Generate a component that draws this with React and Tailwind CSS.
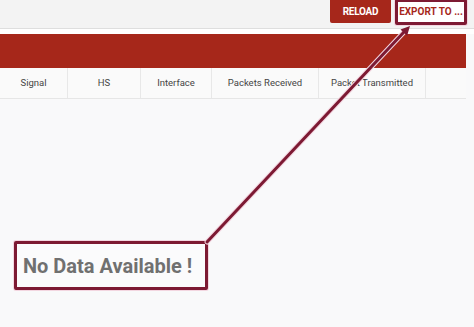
import React from 'react';

const columns = [
  { label: 'Signal', w: 'w-[68px]' },
  { label: 'HS', w: 'w-[73px]' },
  { label: 'Interface', w: 'w-[71px]' },
  { label: 'Packets Received', w: 'w-[107px]' },
  { label: 'Packet Transmitted', w: 'w-[107px]' },
];

const App = () => {
  return (
    <div className="relative w-[474px] h-[327px] overflow-hidden bg-[#f9f9fa] font-['Roboto','Liberation_Sans',sans-serif]">
      {/* Toolbar */}
      <div className="h-[29px] bg-[#f3f3f3] border-b border-[#dedede] flex justify-end items-start pr-[7px] gap-[4px]">
        <button className="h-[23px] w-[61px] bg-[#a6271b] text-white text-[10px] font-bold tracking-tight rounded-b-[2px]">
          RELOAD
        </button>
        <button className="h-[26px] w-[72px] -mt-[1px] bg-white text-[#a6271b] text-[10px] font-bold border-[3px] border-[#7d1a33] rounded-[2px] shadow-[0_0_0_1px_#f3d6e0] leading-none whitespace-nowrap">
          EXPORT TO ...
        </button>
      </div>

      <div className="h-[5px] bg-white" />

      {/* Red band */}
      <div className="h-[34px] w-[466px] bg-[#a6271a]" />

      {/* Table header */}
      <div className="w-[466px] h-[31px] flex border-b border-[#e6e6e6] bg-[#fafafa]">
        {columns.map((c) => (
          <div
            key={c.label}
            className={`${c.w} h-full flex items-center justify-center border-r border-[#e8e8e8] text-[9.5px] text-[#454545]`}
          >
            {c.label}
          </div>
        ))}
        <div className="flex-1" />
      </div>

      {/* Empty state */}
      <div className="pt-[142px] pl-[14px]">
        <div className="w-[194px] h-[49px] border-[3px] border-[#7d1a33] rounded-[2px] shadow-[0_0_0_1px_#f3d6e0] bg-[#fbfbfc] flex items-center pl-[6px]">
          <span className="text-[20px] font-bold text-[#707070]">No Data Available !</span>
        </div>
      </div>

      {/* Annotation arrow */}
      <svg className="absolute inset-0 pointer-events-none" width="474" height="327" viewBox="0 0 474 327">
        <line x1="207" y1="242" x2="404" y2="32" stroke="#f3d6e0" strokeWidth="5" strokeLinecap="round" />
        <line x1="207" y1="242" x2="404" y2="32" stroke="#7d1a33" strokeWidth="3" strokeLinecap="round" />
        <polygon points="410,26 407.1,35.7 400.5,29.5" fill="#7d1a33" />
      </svg>
    </div>
  );
};

export default App;
